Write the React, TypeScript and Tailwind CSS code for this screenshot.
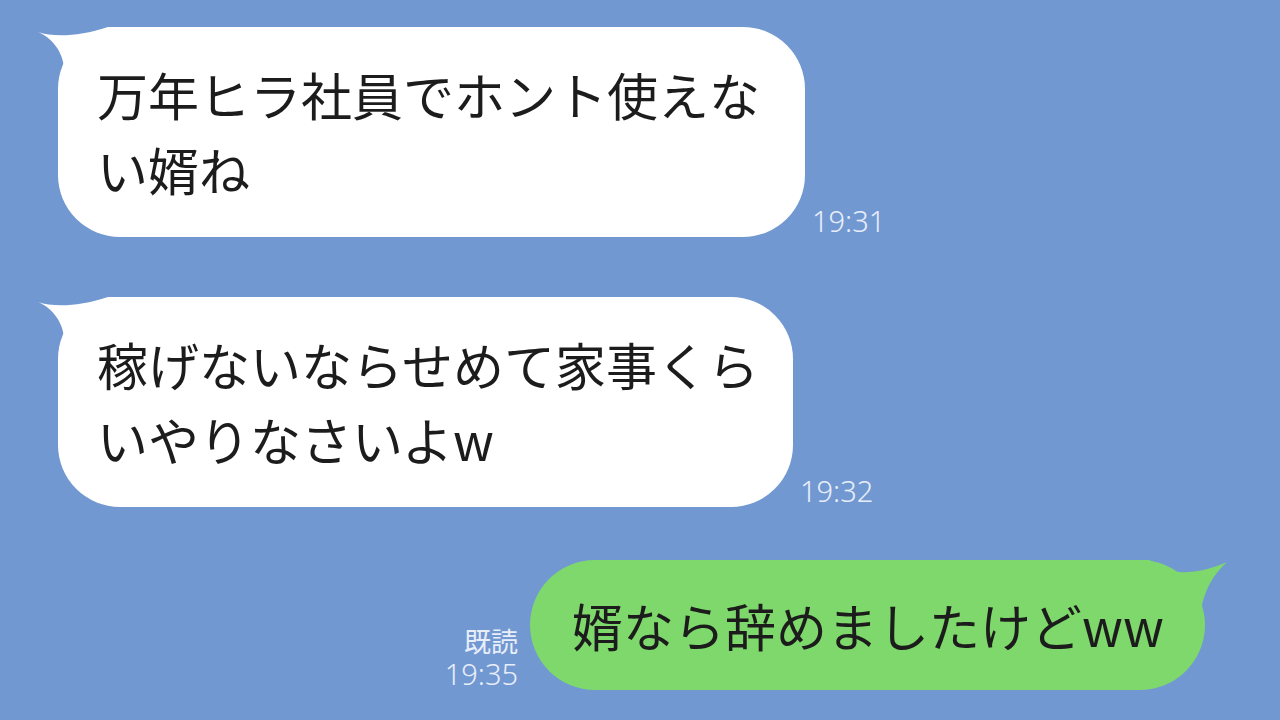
import React from 'react';

const jp = { fontFamily: '"Noto Sans CJK JP", "Noto Sans", sans-serif' };
const num = { fontFamily: '"Noto Sans", "Noto Sans CJK JP", sans-serif' };

function LeftTail() {
  return (
    <svg className="absolute -left-5 top-0" width="90" height="62" viewBox="0 0 90 62">
      <path d="M0 5 C 15 10, 40 10, 70 0 L 90 0 L 90 62 L 26 62 L 26 40 C 24 22, 12 10, 0 5 Z" fill="#ffffff" />
    </svg>
  );
}

// mirrored horn on the sent bubble
function RightTail() {
  return (
    <svg className="absolute -right-[22px] top-0 -scale-x-100" width="94" height="64" viewBox="0 0 94 64">
      <path
        d="M0 2 C 18 10, 34 13, 48 12 C 60 11, 68 4, 78 0 L 94 0 L 94 64 L 26 64 C 28 45, 20 20, 0 2 Z"
        fill="#7ed86b"
      />
    </svg>
  );
}

function Incoming({ lines, time, width }: { lines: string[]; time: string; width: string }) {
  return (
    <div className="flex items-end gap-[7px] pl-[58px]">
      <div className={`relative ${width} h-[210px] rounded-[62px] bg-white pl-[39px] pt-[30px]`}>
        <LeftTail />
        <p className="relative text-[51px] leading-[75px] text-[#1c1c1c] whitespace-nowrap" style={jp}>
          {lines[0]}
          <br />
          {lines[1]}
        </p>
      </div>
      <span className="mb-[2px] text-[29px] leading-none font-light text-[#e8eef9]" style={num}>
        {time}
      </span>
    </div>
  );
}

export default function App() {
  return (
    <div className="w-[1280px] h-[720px] overflow-hidden bg-[#7298d2] pt-[27px]">
      <Incoming lines={['万年ヒラ社員でホント使えな', 'い婿ね']} time="19:31" width="w-[747px]" />
      <div className="h-[60px]" />
      <Incoming lines={['稼げないならせめて家事くら', 'いやりなさいよw']} time="19:32" width="w-[735px]" />
      <div className="h-[53px]" />
      <div className="flex items-end justify-end gap-[12px] pr-[75px]">
        <div className="mb-[2px] flex flex-col items-end text-[#e8eef9]">
          <span className="text-[27px] leading-[36px]" style={jp}>
            既読
          </span>
          <span className="text-[29px] leading-none font-light" style={num}>
            19:35
          </span>
        </div>
        <div className="relative flex h-[130px] w-[675px] items-center rounded-[65px] bg-[#7ed86b] pl-[42px]">
          <RightTail />
          <p className="relative text-[51px] leading-none text-[#1c1c1c] whitespace-nowrap" style={jp}>
            婿なら辞めましたけどww
          </p>
        </div>
      </div>
    </div>
  );
}
